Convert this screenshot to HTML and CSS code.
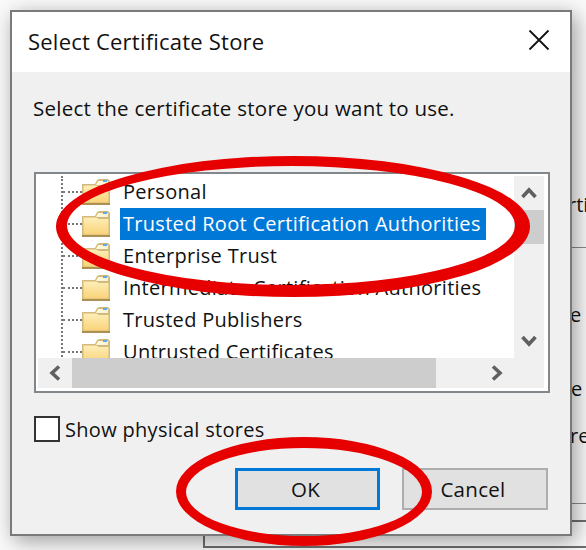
FILE: index.html
```html
<!DOCTYPE html>
<html lang="en">
<head>
<meta charset="utf-8">
<title>Select Certificate Store</title>
<link rel="stylesheet" href="styles.css">
</head>
<body>
<svg width="0" height="0" class="defs">
  <defs>
    <linearGradient id="fbody" x1="0" y1="0" x2="0" y2="1">
      <stop offset="0" stop-color="#fdeeb6"/>
      <stop offset="1" stop-color="#f9d379"/>
    </linearGradient>
  </defs>
  <symbol id="folder" viewBox="0 0 28 26">
    <path d="M0 5 H13 L15 1 L17 0 H26 L28 2 V26 H0 Z" fill="#d2b97e"/>
    <path d="M16 2 H26 V6 H14 Z" fill="#fff6d8"/>
    <path d="M21 1 H25 V3 H21 Z" fill="#5ea8e6"/>
    <path d="M1.5 6.5 H14 L17 8 H26.5 V23.5 H1.5 Z" fill="url(#fbody)"/>
    <path d="M0 24 H28 V26 H0 Z" fill="#ad9152"/>
  </symbol>
</svg>
<div class="desktop">
  <div class="back">
    <span class="back-text t1">rti</span>
    <span class="back-text t2">e s</span>
    <span class="back-text t3">e</span>
    <span class="back-text t4">re</span>
    <span class="back-rule r1"></span>
    <span class="back-rule r2"></span>
    <span class="back-frame"></span>
  </div>

  <div class="dialog">
    <header class="titlebar">
      <h1 class="title">Select Certificate Store</h1>
      <svg class="close" width="22" height="22" viewBox="0 0 22 22"><path d="M1.5 1.5 L20.5 20.5 M20.5 1.5 L1.5 20.5" stroke="#111" stroke-width="1.8" fill="none"/></svg>
    </header>
    <div class="body">
      <p class="prompt">Select the certificate store you want to use.</p>
      <div class="listbox">
        <div class="viewport">
          <ul class="tree">
            <li class="row"><span class="conn"></span><svg class="ico"><use href="#folder"/></svg><span class="label">Personal</span></li>
            <li class="row"><span class="conn"></span><svg class="ico"><use href="#folder"/></svg><span class="label selected">Trusted Root Certification Authorities</span></li>
            <li class="row"><span class="conn"></span><svg class="ico"><use href="#folder"/></svg><span class="label">Enterprise Trust</span></li>
            <li class="row"><span class="conn"></span><svg class="ico"><use href="#folder"/></svg><span class="label">Intermediate Certification Authorities</span></li>
            <li class="row"><span class="conn"></span><svg class="ico"><use href="#folder"/></svg><span class="label">Trusted Publishers</span></li>
            <li class="row"><span class="conn"></span><svg class="ico"><use href="#folder"/></svg><span class="label">Untrusted Certificates</span></li>
          </ul>
        </div>
        <div class="vscroll">
          <button class="arrow-v"><svg width="16" height="12" viewBox="0 0 16 12"><path d="M1.5 10 L8 3 L14.5 10" stroke="#606060" stroke-width="3.6" fill="none"/></svg></button>
          <span class="vthumb"></span>
          <span class="spacer"></span>
          <button class="arrow-v"><svg width="16" height="12" viewBox="0 0 16 12"><path d="M1.5 2 L8 9 L14.5 2" stroke="#606060" stroke-width="3.6" fill="none"/></svg></button>
        </div>
        <div class="hscroll">
          <button class="arrow-h"><svg width="12" height="16" viewBox="0 0 12 16"><path d="M10 1.5 L3 8 L10 14.5" stroke="#606060" stroke-width="3.6" fill="none"/></svg></button>
          <span class="hthumb"></span>
          <span class="spacer"></span>
          <button class="arrow-h"><svg width="12" height="16" viewBox="0 0 12 16"><path d="M2 1.5 L9 8 L2 14.5" stroke="#606060" stroke-width="3.6" fill="none"/></svg></button>
        </div>
        <div class="corner"></div>
      </div>
      <label class="check"><span class="box"></span><span class="check-text">Show physical stores</span></label>
      <div class="actions">
        <button class="btn default">OK</button>
        <button class="btn">Cancel</button>
      </div>
    </div>
  </div>

  <svg class="marks" width="586" height="550" viewBox="0 0 586 550">
    <path fill="#e60000" fill-rule="evenodd" d="M56 226.5 A237 70.5 0 0 1 530 226.5 A237 70.5 0 0 1 56 226.5 Z M67 225.5 A224 59.5 0 0 0 515 225.5 A224 59.5 0 0 0 67 225.5 Z"/>
    <path fill="#e60000" fill-rule="evenodd" d="M176 491.5 A128 54.5 0 0 1 432 491.5 A128 54.5 0 0 1 176 491.5 Z M186 492 A118 44 0 0 0 422 492 A118 44 0 0 0 186 492 Z"/>
  </svg>
</div>
</body>
</html>
```
FILE: styles.css
```css
* { box-sizing: border-box; }
html, body { margin: 0; padding: 0; }
body { width: 586px; height: 550px; overflow: hidden; background: #fff; font-family: "Open Sans", "Noto Sans", sans-serif; color: #111; }
.defs { position: absolute; }
.desktop { position: relative; width: 586px; height: 550px; overflow: hidden; background: #fafafa; }

.back-text { position: absolute; font-size: 20px; line-height: 24px; white-space: nowrap; }
.back-text.t1 { left: 568px; top: 193px; }
.back-text.t2 { left: 570px; top: 303px; }
.back-text.t3 { left: 571px; top: 377px; }
.back-text.t4 { left: 570px; top: 424px; }
.back-rule { position: absolute; left: 571px; width: 15px; height: 1px; background: #8a8a8a; }
.back-rule.r1 { top: 247px; }
.back-rule.r2 { top: 503px; }
.back-frame { position: absolute; left: 203px; top: 520px; width: 400px; height: 28px; border: 2px solid #6e6e6e; }

.dialog { position: absolute; left: 10px; top: 10px; width: 562px; height: 526px; background: #f0f0f0; border: 2px solid #7a7a7a; box-shadow: 4px 5px 20px rgba(0,0,0,.38); display: flex; flex-direction: column; }
.titlebar { height: 60px; flex: none; background: #fff; display: flex; align-items: center; justify-content: space-between; padding: 0 20px 0 16px; }
.title { margin: -2px 0 0; font-size: 22px; letter-spacing: .22px; font-weight: 400; line-height: 28px; }
.close { display: block; margin-top: -5px; }

.body { flex: 1; padding: 22px 22px 0 22px; display: flex; flex-direction: column; }
.prompt { margin: 0 0 0 -1px; font-size: 20.5px; letter-spacing: .26px; line-height: 28px; }

.listbox { margin-top: 50px; width: 516px; height: 221px; border: 2px solid #82878c; background: #fff; padding: 2px; display: grid; grid-template-columns: 476px 30px; grid-template-rows: 182px 30px; flex: none; }
.viewport { overflow: hidden; background: #fff; padding-left: 23px; }
.tree { list-style: none; margin: 16px 0 0 0; padding: 0; border-left: 2px dotted #777; height: 200px; }
.row { height: 32px; display: flex; align-items: center; margin-top: -16px; }
.row + .row { margin-top: 0; }
.conn { width: 19px; flex: none; border-top: 2px dotted #777; }
.ico { width: 28px; height: 26px; flex: none; }
.label { margin-left: 10px; padding: 0 3px; height: 32px; line-height: 31px; font-size: 20px; letter-spacing: .3px; white-space: nowrap; }
.selected { background: #0078d7; color: #fff; padding-right: 5px; }

.vscroll { background: #f0f0f0; display: flex; flex-direction: column; }
.vthumb { height: 34px; flex: none; background: #cdcdcd; }
.arrow-v { height: 34px; flex: none; border: 0; padding: 0; background: none; display: flex; align-items: center; justify-content: center; }
.spacer { flex: 1; }
.hscroll { background: #f0f0f0; display: flex; }
.hthumb { width: 364px; flex: none; background: #cdcdcd; }
.arrow-h { width: 34px; flex: none; border: 0; padding: 0; background: none; display: flex; align-items: center; justify-content: center; }
.corner { background: #f0f0f0; }

.check { display: flex; align-items: center; margin-top: 23px; height: 26px; }
.box { width: 26px; height: 26px; background: #fff; border: 2px solid #333; flex: none; }
.check-text { margin: 1px 0 0 5px; font-size: 20px; letter-spacing: .3px; line-height: 26px; color: #111; }

.actions { display: flex; gap: 22px; margin-top: 26px; padding-left: 201px; }
.btn { width: 146px; height: 42px; background: #e1e1e1; border: 2px solid #adadad; font: inherit; font-size: 20.5px; letter-spacing: .3px; color: #111; padding: 0 4px 0 0; }
.btn.default { width: 145px; border: 3px solid #0078d7; }

.marks { position: absolute; left: 0; top: 0; pointer-events: none; }
```
